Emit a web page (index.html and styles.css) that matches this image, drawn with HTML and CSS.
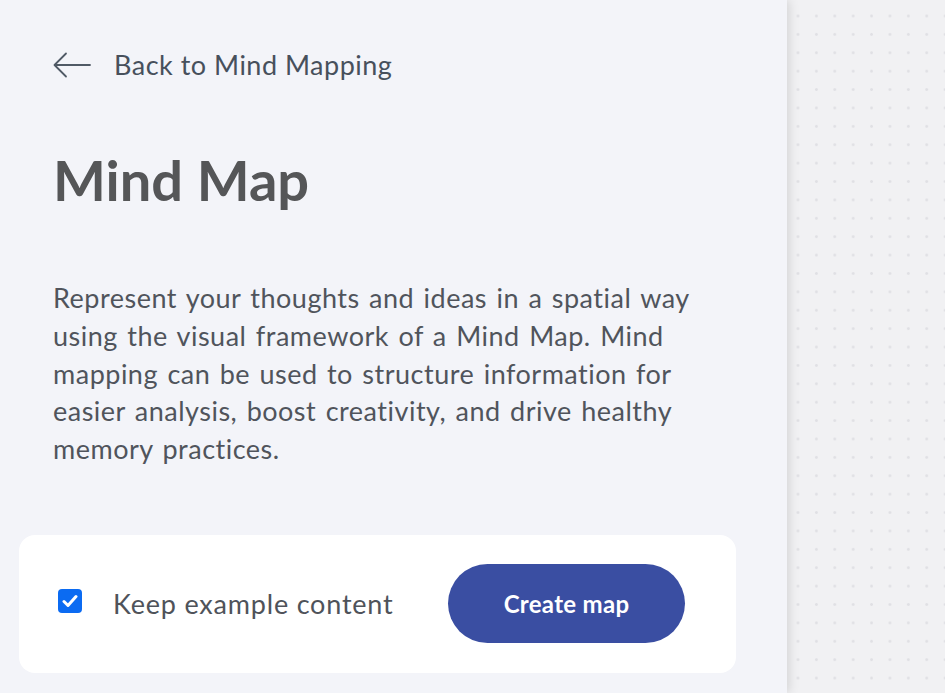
FILE: index.html
```html
<!DOCTYPE html>
<html lang="en">
<head>
<meta charset="utf-8">
<title>Mind Map</title>
<link rel="stylesheet" href="styles.css">
</head>
<body>
<div class="app">
  <aside class="panel">
    <a class="back" href="#">
      <svg class="back-icon" width="38" height="26" viewBox="0 0 38 26" aria-hidden="true">
        <path d="M37 13H2M13 1.5L1.5 13L13 24.5" fill="none" stroke="#505a66" stroke-width="1.8" stroke-linecap="round" stroke-linejoin="round"/>
      </svg>
      <span>Back to Mind Mapping</span>
    </a>
    <h1 class="title">Mind Map</h1>
    <p class="desc">Represent your thoughts and ideas in a spatial way using the visual framework of a Mind Map. Mind mapping can be used to structure information for easier analysis, boost creativity, and drive healthy memory practices.</p>
    <div class="card">
      <label class="keep">
        <span class="check">
          <svg width="16" height="14" viewBox="0 0 16 14" aria-hidden="true">
            <path d="M2 7.5L6 11.5L14 2.5" fill="none" stroke="#fff" stroke-width="3" stroke-linecap="round" stroke-linejoin="round"/>
          </svg>
        </span>
        <span>Keep example content</span>
      </label>
      <button class="create">Create map</button>
    </div>
  </aside>
  <main class="canvas"></main>
</div>
</body>
</html>
```

FILE: styles.css
```css
* { box-sizing: border-box; }
html, body { margin: 0; padding: 0; height: 100%; }
body {
  font-family: Lato, "Open Sans", sans-serif;
  overflow: hidden;
  background: #f1f1f3;
}
.app {
  display: flex;
  height: 693px;
}
.panel {
  width: 787px;
  flex: 0 0 787px;
  background: #f3f4f9;
  padding: 50px 51px 0 19px;
  position: relative;
  z-index: 1;
  box-shadow: 2px 0 10px rgba(0,0,0,0.13);
  display: flex;
  flex-direction: column;
}
.back {
  display: flex;
  align-items: center;
  gap: 23px;
  margin-left: 34px;
  color: #47505c;
  text-decoration: none;
  font-size: 27px;
  letter-spacing: 0.5px;
  line-height: 30px;
  height: 30px;
}
.back-icon { flex: none; }
.title {
  margin: 67px 0 0 34px;
  font-size: 56px;
  font-weight: 700;
  line-height: 66px;
  color: #555658;
}
.desc {
  margin: 66px 0 0 34px;
  width: 668px;
  font-size: 27px;
  letter-spacing: 0.5px;
  word-spacing: 2px;
  line-height: 37.8px;
  color: #50545c;
}
.card {
  margin-top: 67px;
  height: 138px;
  flex: none;
  background: #fff;
  border-radius: 16px;
  padding: 0 51px 0 39px;
  display: flex;
  align-items: center;
  justify-content: space-between;
}
.keep {
  display: flex;
  align-items: center;
  gap: 31px;
  font-size: 27px;
  letter-spacing: 0.8px;
  color: #4f535a;
}
.check {
  width: 24px;
  height: 24px;
  border-radius: 4px;
  background: #0b6bf2;
  display: flex;
  align-items: center;
  justify-content: center;
  margin-top: -5px;
}
.create {
  width: 237px;
  height: 79px;
  border: none;
  border-radius: 40px;
  background: #3a4ea2;
  color: #fff;
  font-family: Lato, "Open Sans", sans-serif;
  font-weight: 700;
  font-size: 24px;
  letter-spacing: 0.3px;
}
.canvas {
  flex: 1;
  background-color: #f1f1f3;
  background-image: radial-gradient(circle, #e0e0e4 1.1px, rgba(224,224,228,0) 1.6px);
  background-size: 18.4px 18.4px;
  background-position: 1.8px 6.8px;
}
```
